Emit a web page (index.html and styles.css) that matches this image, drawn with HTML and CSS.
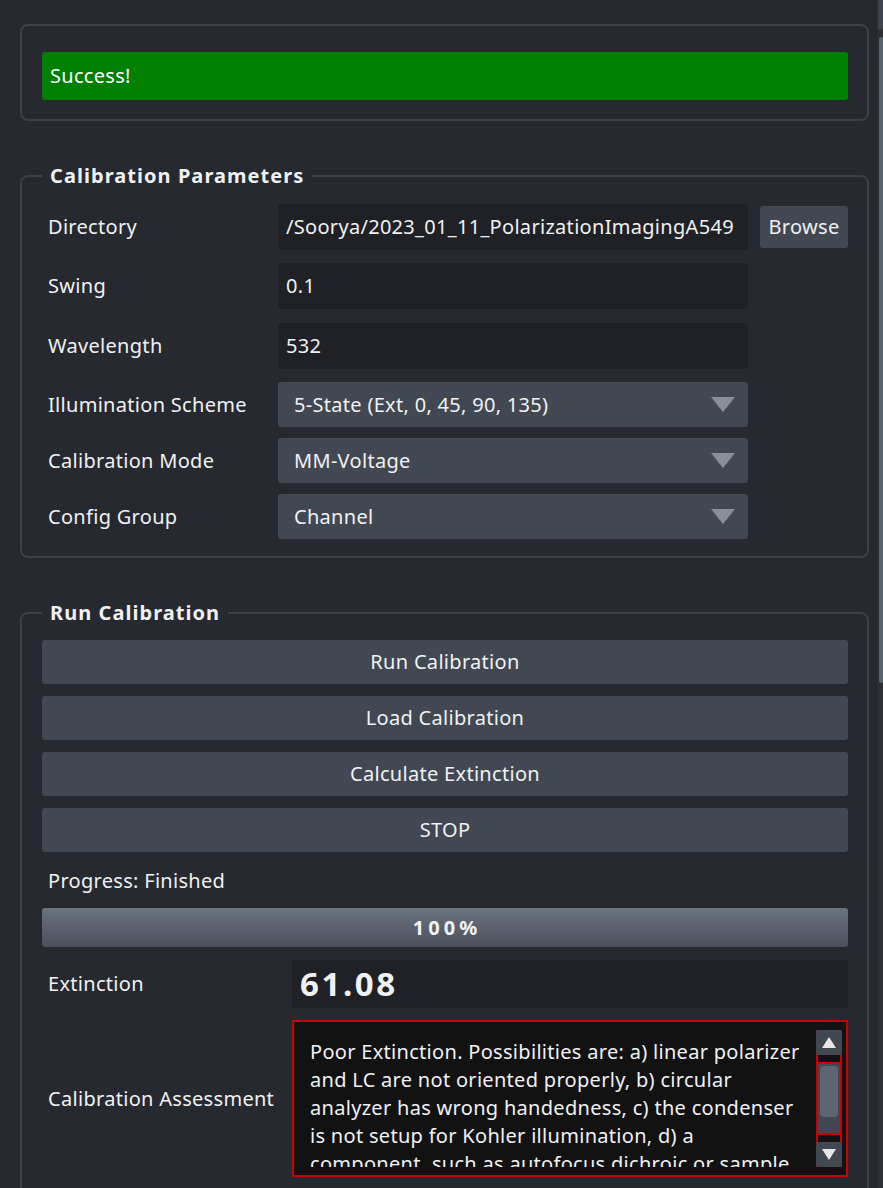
FILE: index.html
```html
<!DOCTYPE html>
<html>
<head>
<meta charset="utf-8">
<link rel="stylesheet" href="styles.css">
</head>
<body>
<div class="page">
  <div class="box">
    <div class="status">Success!</div>
  </div>

  <fieldset class="group">
    <legend>Calibration Parameters</legend>
    <div class="params">
      <div class="row row-edit">
        <div class="label">Directory</div>
        <div class="edit">/Soorya/2023_01_11_PolarizationImagingA549</div>
        <div class="btn small">Browse</div>
      </div>
      <div class="row row-edit mid">
        <div class="label">Swing</div>
        <div class="edit">0.1</div>
      </div>
      <div class="row row-edit">
        <div class="label">Wavelength</div>
        <div class="edit">532</div>
      </div>
      <div class="row row-combo">
        <div class="label">Illumination Scheme</div>
        <div class="combo"><span>5-State (Ext, 0, 45, 90, 135)</span><i class="arrow"></i></div>
      </div>
      <div class="row row-combo">
        <div class="label">Calibration Mode</div>
        <div class="combo"><span>MM-Voltage</span><i class="arrow"></i></div>
      </div>
      <div class="row row-combo">
        <div class="label">Config Group</div>
        <div class="combo"><span>Channel</span><i class="arrow"></i></div>
      </div>
    </div>
  </fieldset>

  <fieldset class="group run">
    <legend>Run Calibration</legend>
    <div class="runbody">
      <div class="btn wide">Run Calibration</div>
      <div class="btn wide">Load Calibration</div>
      <div class="btn wide">Calculate Extinction</div>
      <div class="btn wide">STOP</div>
      <div class="progress-label">Progress: Finished</div>
      <div class="progress">100%</div>
      <div class="result-row ext">
        <div class="label">Extinction</div>
        <div class="extbox">61.08</div>
      </div>
      <div class="result-row assess">
        <div class="label">Calibration Assessment</div>
        <div class="textedit">
          <div class="tx">Poor Extinction. Possibilities are: a) linear polarizer<br>and LC are not oriented properly, b) circular<br>analyzer has wrong handedness, c) the condenser<br>is not setup for Kohler illumination, d) a<br>component, such as autofocus dichroic or sample<br>chamber, might be causing depolarization.</div>
          <div class="vscroll">
            <div class="sbtn"><i class="up"></i></div>
            <div class="strack">
              <div class="sthumb"><div class="handle"></div></div>
            </div>
            <div class="sbtn"><i class="down"></i></div>
          </div>
        </div>
      </div>
    </div>
  </fieldset>
</div>
<div class="pagescroll">
  <div class="ps-top"></div>
  <div class="ps-thumb"></div>
</div>
</body>
</html>
```

FILE: styles.css
```css
html, body {
  margin: 0;
  padding: 0;
}
body {
  width: 883px;
  height: 1188px;
  overflow: hidden;
  background: #262930;
  color: #f0f1f2;
  font-family: "Noto Sans", "Open Sans", sans-serif;
  font-size: 20px;
  line-height: 28px;
  letter-spacing: 0.3px;
  display: flex;
}
.page {
  width: 849px;
  padding: 24px 8px 0 20px;
  flex: none;
}
.box {
  border: 2px solid #3c4048;
  border-radius: 8px;
  padding: 26px 19px 19px 20px;
}
.status {
  height: 48px;
  background: #008000;
  border-radius: 3px;
  display: flex;
  align-items: center;
  padding-left: 8px;
  color: #ffffff;
}
.group {
  margin: 41px 0 0 0;
  border: 2px solid #3c4048;
  border-radius: 8px;
  padding: 0;
  min-inline-size: 0;
}
.group legend {
  margin-left: 20px;
  padding: 0 8px;
  font-weight: bold;
  line-height: 28px;
  letter-spacing: 1.05px;
}
.params {
  padding: 14px 19px 17px 26px;
  display: flex;
  flex-direction: column;
  gap: 11px;
}
.row {
  display: grid;
  grid-template-columns: 218px 470px 88px;
  column-gap: 12px;
  align-items: center;
}
.row-edit { height: 46px; margin-bottom: 2px; }
.row-edit.mid { margin-bottom: 3px; }
.row-combo { height: 45px; }
.label { white-space: nowrap; }
.edit {
  height: 100%;
  background: #1f2126;
  border-radius: 3px;
  display: flex;
  align-items: center;
  padding-left: 8px;
  white-space: nowrap;
  overflow: hidden;
}
.btn {
  background: #414851;
  border-radius: 3px;
  display: flex;
  align-items: center;
  justify-content: center;
}
.btn.small { height: 42px; }
.combo {
  height: 100%;
  background: #414851;
  border-radius: 3px;
  display: flex;
  align-items: center;
  justify-content: space-between;
  padding: 0 13px 0 16px;
}
.arrow {
  width: 0;
  height: 0;
  border-left: 12.5px solid transparent;
  border-right: 12.5px solid transparent;
  border-top: 15px solid #8a8e95;
}
.runbody {
  padding: 13px 19px 40px 20px;
  display: flex;
  flex-direction: column;
}
.btn.wide { height: 44px; margin-bottom: 12px; }
.btn.wide:nth-child(4) { margin-bottom: 0; }
.progress-label {
  margin-top: 15px;
  padding-left: 6px;
}
.progress {
  margin-top: 13px;
  height: 39px;
  border-radius: 3px;
  background: linear-gradient(#6b7380, #4a505a);
  display: flex;
  align-items: center;
  justify-content: center;
  font-weight: bold;
  letter-spacing: 4px;
  padding-left: 4px;
}
.result-row {
  display: grid;
  grid-template-columns: 250px 556px;
  align-items: center;
}
.result-row .label { padding-left: 6px; }
.result-row.ext { margin-top: 13px; height: 48px; }
.extbox {
  height: 48px;
  background: #1f2126;
  border-radius: 3px;
  display: flex;
  align-items: center;
  padding-left: 8px;
  font-size: 33px;
  font-weight: bold;
  letter-spacing: 2.6px;
}
.result-row.assess { margin-top: 12px; height: 157px; }
.textedit {
  box-sizing: border-box;
  height: 157px;
  border: 2px solid #cc0000;
  background: #121212;
  padding: 8px 4px 8px 0;
  display: flex;
}
.tx {
  flex: 1;
  padding: 8px 0 0 16px;
  white-space: nowrap;
  overflow: hidden;
}
.vscroll {
  width: 22px;
  border-left: 2px solid #cc0000;
  border-right: 2px solid #cc0000;
  display: flex;
  flex-direction: column;
  background: #121212;
}
.sbtn {
  height: 25px;
  margin: 0 -2px;
  background: #414851;
  border-radius: 2px;
  display: flex;
  align-items: center;
  justify-content: center;
}
.up, .down {
  width: 0;
  height: 0;
  border-left: 7px solid transparent;
  border-right: 7px solid transparent;
}
.up { border-bottom: 11px solid #e6e7e9; }
.down { border-top: 11px solid #e6e7e9; }
.strack {
  flex: 1;
  padding: 7px 0;
}
.sthumb {
  box-sizing: border-box;
  height: 73px;
  background: #414851;
  border-top: 2px solid #cc0000;
  border-bottom: 2px solid #cc0000;
  padding: 2px 2px;
}
.handle {
  height: 51px;
  background: #5d6572;
  border-radius: 4px;
}
.pagescroll {
  width: 6px;
  flex: none;
  background: #2c2f36;
  display: flex;
  flex-direction: column;
  align-items: flex-end;
}
.ps-top {
  width: 5px;
  height: 30px;
  background: #3e434c;
  border-radius: 0 0 3px 3px;
}
.ps-thumb {
  margin-top: 7px;
  width: 4px;
  height: 646px;
  background: #5a626c;
  border-radius: 3px;
}
```
